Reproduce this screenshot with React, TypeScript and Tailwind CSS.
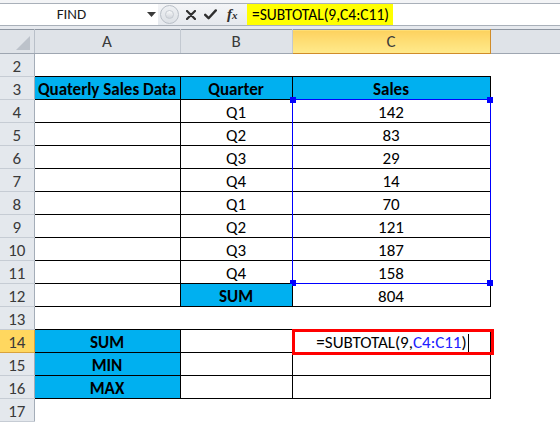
import React from "react";

const FONT = "font-['Calibri','Carlito','Lato','Liberation_Sans',sans-serif]";

type Cell = {
  t?: string;
  b?: boolean; // border
  cyan?: boolean;
  bold?: boolean;
};

const rows: { n: number; cells: Cell[] }[] = [
  { n: 2, cells: [{}, {}, {}] },
  {
    n: 3,
    cells: [
      { t: "Quaterly Sales Data", b: true, cyan: true, bold: true },
      { t: "Quarter", b: true, cyan: true, bold: true },
      { t: "Sales", b: true, cyan: true, bold: true },
    ],
  },
  { n: 4, cells: [{ b: true }, { t: "Q1", b: true }, { t: "142", b: true }] },
  { n: 5, cells: [{ b: true }, { t: "Q2", b: true }, { t: "83", b: true }] },
  { n: 6, cells: [{ b: true }, { t: "Q3", b: true }, { t: "29", b: true }] },
  { n: 7, cells: [{ b: true }, { t: "Q4", b: true }, { t: "14", b: true }] },
  { n: 8, cells: [{ b: true }, { t: "Q1", b: true }, { t: "70", b: true }] },
  { n: 9, cells: [{ b: true }, { t: "Q2", b: true }, { t: "121", b: true }] },
  { n: 10, cells: [{ b: true }, { t: "Q3", b: true }, { t: "187", b: true }] },
  { n: 11, cells: [{ b: true }, { t: "Q4", b: true }, { t: "158", b: true }] },
  {
    n: 12,
    cells: [{ b: true }, { t: "SUM", b: true, cyan: true, bold: true }, { t: "804", b: true }],
  },
  { n: 13, cells: [{}, {}, {}] },
  { n: 14, cells: [{ t: "SUM", b: true, cyan: true, bold: true }, { b: true }, { b: true }] },
  { n: 15, cells: [{ t: "MIN", b: true, cyan: true, bold: true }, { b: true }, { b: true }] },
  { n: 16, cells: [{ t: "MAX", b: true, cyan: true, bold: true }, { b: true }, { b: true }] },
  { n: 17, cells: [{}, {}, {}] },
];

function Handle({ className }: { className: string }) {
  return <div className={`absolute w-[6px] h-[6px] bg-[#0000ff] ${className}`} />;
}

export default function App() {
  return (
    <div className={`w-[560px] h-[423px] overflow-hidden bg-white ${FONT}`}>
      {/* Formula bar */}
      <div className="h-[29px] flex flex-col bg-[#e9ecf1]">
        <div className="h-[4px] bg-[#f3f4f6] border-b border-[#a9b0b9]" />
        <div className="h-[21px] flex">
          <div className="w-[158px] bg-white flex items-center">
            <div className="w-[143px] text-center text-[15px] text-[#1a1a1a] leading-none">FIND</div>
            <svg width="9" height="5" viewBox="0 0 9 5" className="ml-[4px]">
              <path d="M0 0 H9 L4.5 5 Z" fill="#3a3a3a" />
            </svg>
          </div>
          <div className="w-[89px] relative flex items-center bg-gradient-to-b from-[#f4f5f7] to-[#e6e9ee]">
            <div className="absolute left-[2px] top-[1px] w-[19px] h-[19px] rounded-full border border-[#b9bfc7] bg-gradient-to-b from-[#eef0f3] to-[#dde1e6] flex items-center justify-center">
              <div className="w-[9px] h-[9px] rounded-full bg-gradient-to-b from-[#f8f9fa] to-[#d2d6dc] border border-[#c6cbd2]" />
            </div>
            <svg width="10" height="10" viewBox="0 0 10 10" className="absolute left-[28px] top-[6px]">
              <path d="M1 1 L9 9 M9 1 L1 9" stroke="#2f2f2f" strokeWidth="2.2" strokeLinecap="round" />
            </svg>
            <svg width="13" height="11" viewBox="0 0 13 11" className="absolute left-[46px] top-[5px]">
              <path d="M1.2 5.8 L4.6 9.2 L11.8 1.4" stroke="#2f2f2f" strokeWidth="2.4" fill="none" strokeLinecap="round" strokeLinejoin="round" />
            </svg>
            <div className="absolute left-[69px] top-[1px] font-['Liberation_Serif',serif] italic text-[#2f2f2f] text-[15px] leading-none flex items-baseline pt-[2px]">
              <span className="font-bold">f</span>
              <span className="text-[11px] font-bold">x</span>
            </div>
          </div>
          <div className="flex-1 bg-white flex items-stretch">
            <div className="w-[146px] bg-[#ffff00] flex items-center pl-[5px] text-[15.5px] text-black leading-none">
              =SUBTOTAL(9,C4:C11)
            </div>
          </div>
        </div>
        <div className="h-[1px] bg-[#a9b0b9]" />
        <div className="flex-1 bg-[#e6e9ee]" />
      </div>

      {/* Grid */}
      <table className="table-fixed border-collapse w-[560px]">
        <colgroup>
          <col className="w-[34px]" />
          <col className="w-[146px]" />
          <col className="w-[112px]" />
          <col className="w-[198px]" />
          <col className="w-[70px]" />
        </colgroup>
        <thead>
          <tr className="h-[24px]">
            <th className="p-0 bg-[#dfe3e8] border-t border-b border-r border-t-[#8e96a1] border-b-[#9ea6b1] border-r-[#b9c0c9] relative">
              <svg width="14" height="14" viewBox="0 0 14 14" className="absolute right-[4px] bottom-[3px]">
                <path d="M14 0 V14 H0 Z" fill="#bcc2ca" />
              </svg>
            </th>
            <th className="p-0 bg-[#dfe3e8] border-t border-b border-r border-t-[#8e96a1] border-b-[#9ea6b1] border-r-[#c3c9d1] font-normal text-[17px] leading-none text-[#3a3a3a]">
              A
            </th>
            <th className="p-0 bg-[#dfe3e8] border-t border-b border-r border-t-[#8e96a1] border-b-[#9ea6b1] border-r-[#c3c9d1] font-normal text-[17px] leading-none text-[#3a3a3a]">
              B
            </th>
            <th className="p-0 bg-gradient-to-b from-[#fdd25e] to-[#ffea8c] border-t border-b border-r border-l border-t-[#8e96a1] border-b-[#d08c2a] border-x-[#d08c2a] font-normal text-[17px] leading-none text-[#3a3a3a]">
              C
            </th>
            <th className="p-0 bg-[#dfe3e8] border-t border-b border-t-[#8e96a1] border-b-[#9ea6b1]" />
          </tr>
        </thead>
        <tbody>
          {rows.map((r) => {
            const sel = r.n === 14;
            return (
              <tr key={r.n} className="h-[23px]">
                <td
                  className={`p-0 pt-[2px] text-center text-[17px] leading-none border-r border-b ${
                    sel
                      ? "bg-[#ffd75f] border-b-[#d9a23c] border-r-[#d9a23c] text-[#3a3a3a]"
                      : "bg-[#e4e8ed] border-b-[#c6ccd4] border-r-[#a4adb8] text-[#3a3a3a]"
                  }`}
                >
                  {r.n}
                </td>
                {r.cells.map((c, i) => (
                  <td
                    key={i}
                    className={`p-0 pt-[2px] relative text-center text-[17px] leading-none text-black ${
                      c.b ? "border border-black" : ""
                    } ${c.cyan ? "bg-[#00b0f0]" : ""} ${c.bold ? "font-bold" : ""}`}
                  >
                    {c.t}
                    {r.n === 4 && i === 2 && (
                      <div className="absolute left-[-1px] top-[-1px] w-[199px] h-[185px] border border-[#0000ff] pointer-events-none">
                        <Handle className="left-[-3px] top-[-3px]" />
                        <Handle className="right-[-3px] top-[-3px]" />
                        <Handle className="left-[-3px] bottom-[-3px]" />
                        <Handle className="right-[-3px] bottom-[-3px]" />
                      </div>
                    )}
                    {r.n === 14 && i === 2 && (
                      <div className="absolute left-[-1px] top-[-1px] w-[202px] h-[26px] border-[3px] border-[#ff0000] flex items-center justify-center pt-[1px]">
                        <span className="text-black">=SUBTOTAL(9,</span>
                        <span className="text-[#2020ff]">C4:C11</span>
                        <span className="text-black">)</span>
                        <span className="inline-block w-[1px] h-[18px] bg-black ml-[1px]" />
                      </div>
                    )}
                  </td>
                ))}
                <td className="p-0" />
              </tr>
            );
          })}
        </tbody>
      </table>
    </div>
  );
}
